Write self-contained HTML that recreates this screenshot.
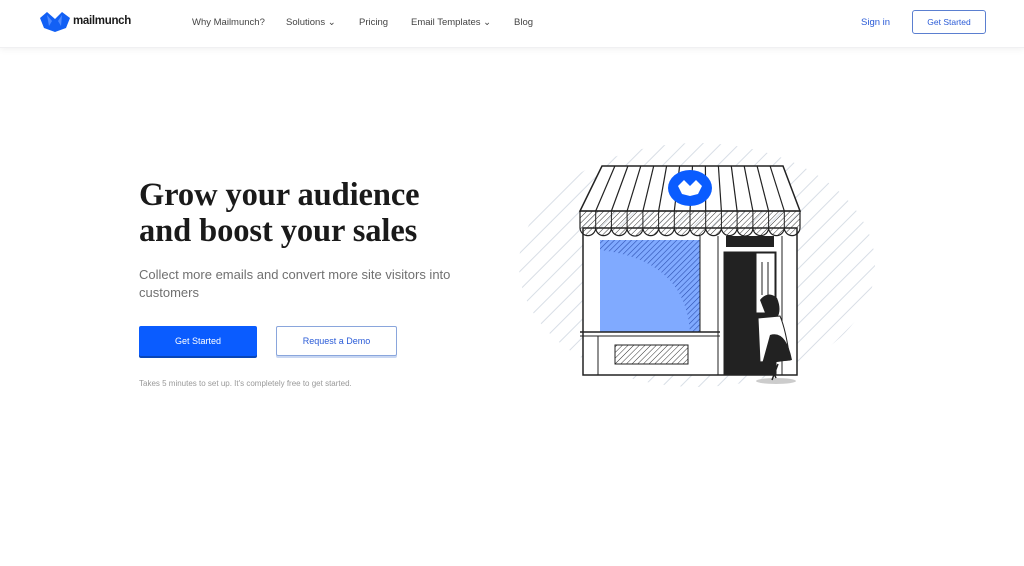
<!DOCTYPE html>
<html><head><meta charset="utf-8"><style>
*{margin:0;padding:0;box-sizing:border-box}
body{width:1024px;height:566px;background:#fff;font-family:"Liberation Sans",sans-serif;position:relative;overflow:hidden}
.nav{position:absolute;left:0;top:0;width:1024px;height:48px;background:#fff;box-shadow:0 2px 6px rgba(0,0,0,.05);border-bottom:1px solid #f0f0f2}
.nav a{position:absolute;top:17px;font-size:9.5px;color:#444;text-decoration:none}
.logo{position:absolute;left:40px;top:12px}
.brand{position:absolute;left:73px;top:15px;font-size:11.5px;font-weight:bold;color:#1a1a1a;letter-spacing:-.3px}
.btnnav{position:absolute;left:912px;top:10px;width:74px;height:24px;border:1px solid #5b7fd0;border-radius:3px;color:#2a5bd7;font-size:8.5px;text-align:center;line-height:22px}
h1{position:absolute;left:139px;top:177px;font-family:"Liberation Serif",serif;font-size:32.5px;line-height:36px;font-weight:bold;color:#1a1a1a;letter-spacing:-.1px}
.sub{position:absolute;left:139px;top:266px;font-size:13px;line-height:18px;color:#707070;width:330px}
.b1{position:absolute;left:139px;top:326px;width:118px;height:30px;background:#0a5cff;border-radius:2px;box-shadow:0 2px 0 #0846b8;color:#fff;font-size:9px;text-align:center;line-height:30px}
.b2{position:absolute;left:276px;top:326px;width:121px;height:30px;border:1px solid #8aa6dc;border-radius:2px;box-shadow:0 2px 0 #c9d7f2;color:#2a5bd7;font-size:9px;text-align:center;line-height:28px}
.small{position:absolute;left:139px;top:379px;font-size:8px;color:#999}
</style></head><body>
<div class="nav">
<svg class="logo" width="30" height="20" viewBox="0 0 30 20"><path d="M0 6 L7 0 L15 7 L22 0 L30 6 L26 16 L15 20 L4 16 Z" fill="#1260f5"/><path d="M7 3 L12 9 L9 14 Z M22 3 L18 9 L21 14 Z" fill="#4f8bff"/></svg>
<div class="brand">mailmunch</div>
<a style="left:192px">Why Mailmunch?</a>
<a style="left:286px">Solutions &#8964;</a>
<a style="left:359px">Pricing</a>
<a style="left:411px">Email Templates &#8964;</a>
<a style="left:514px">Blog</a>
<a style="left:861px;color:#2a5bd7">Sign in</a>
<div class="btnnav">Get Started</div>
</div>
<h1>Grow your audience<br>and boost your sales</h1>
<div class="sub">Collect more emails and convert more site visitors into customers</div>
<div class="b1">Get Started</div>
<div class="b2">Request a Demo</div>
<div class="small">Takes 5 minutes to set up. It's completely free to get started.</div>
<svg style="position:absolute;left:0;top:0" width="1024" height="566">
<defs>
<pattern id="bg" width="13" height="13" patternUnits="userSpaceOnUse" patternTransform="rotate(45)"><line x1="0" y1="0" x2="0" y2="13" stroke="#d8dee6" stroke-width="2"/></pattern>
<pattern id="h" width="4" height="4" patternUnits="userSpaceOnUse" patternTransform="rotate(45)"><line x1="0" y1="0" x2="0" y2="4" stroke="#333" stroke-width="1"/></pattern>
<pattern id="hb" width="4" height="4" patternUnits="userSpaceOnUse" patternTransform="rotate(45)"><line x1="0" y1="0" x2="0" y2="4" stroke="#2c4fb0" stroke-width="1.2"/></pattern>
<clipPath id="win"><rect x="600" y="240" width="100" height="92"/></clipPath>
</defs>
<ellipse cx="697" cy="265" rx="178" ry="122" fill="url(#bg)"/>
<rect x="583" y="228" width="214" height="147" fill="#fff" stroke="#222" stroke-width="1.5"/>
<rect x="600" y="240" width="100" height="92" fill="#80aaff"/>
<g clip-path="url(#win)"><path d="M600 240 L700 240 L700 332 L690 332 Q685 260 600 250 Z" fill="url(#hb)"/></g>
<line x1="700" y1="236" x2="700" y2="332" stroke="#222"/>
<line x1="718" y1="236" x2="718" y2="375" stroke="#222"/>
<line x1="580" y1="332" x2="720" y2="332" stroke="#222" stroke-width="1.5"/>
<line x1="580" y1="336" x2="720" y2="336" stroke="#222"/>
<line x1="598" y1="336" x2="598" y2="375" stroke="#222"/>
<rect x="615" y="345" width="73" height="19" fill="url(#h)" stroke="#222"/>
<rect x="726" y="236" width="48" height="11" fill="#222"/>
<rect x="724" y="252" width="52" height="122" fill="#222" stroke="#222"/>
<rect x="756" y="253" width="19" height="60" fill="#fff" stroke="#222"/>
<line x1="762" y1="262" x2="762" y2="295" stroke="#222"/><line x1="768" y1="262" x2="768" y2="295" stroke="#222"/>
<line x1="782" y1="236" x2="782" y2="375" stroke="#222"/>
<ellipse cx="776" cy="381" rx="20" ry="3" fill="#ccc"/>
<path d="M760 300 Q768 290 777 298 Q782 310 777 318 L767 318 Z" fill="#222"/>
<path d="M758 318 L780 316 Q786 330 790 360 L760 362 Z" fill="#fff" stroke="#222"/>
<path d="M770 335 Q786 330 792 360 L762 364 Z" fill="#222"/>
<path d="M770 364 L776 378 M778 364 L772 380" stroke="#222" stroke-width="1.5"/>
<path d="M602 166 L783 166 L800 211 L580 211 Z" fill="#fff" stroke="#222" stroke-width="1.5"/>
<g stroke="#222" stroke-width="1.2">
<line x1="614.9" y1="166" x2="595.7" y2="211"/><line x1="627.9" y1="166" x2="611.4" y2="211"/><line x1="640.8" y1="166" x2="627.1" y2="211"/><line x1="653.7" y1="166" x2="642.9" y2="211"/><line x1="666.6" y1="166" x2="658.6" y2="211"/><line x1="679.6" y1="166" x2="674.3" y2="211"/><line x1="692.5" y1="166" x2="690" y2="211"/><line x1="705.4" y1="166" x2="705.7" y2="211"/><line x1="718.4" y1="166" x2="721.4" y2="211"/><line x1="731.3" y1="166" x2="737.1" y2="211"/><line x1="744.2" y1="166" x2="752.9" y2="211"/><line x1="757.1" y1="166" x2="768.6" y2="211"/><line x1="770.1" y1="166" x2="784.3" y2="211"/>
</g>
<path d="M580 211 L800 211 L800 228 A7.86 8 0 0 1 784.3 228 A7.86 8 0 0 1 768.6 228 A7.86 8 0 0 1 752.9 228 A7.86 8 0 0 1 737.1 228 A7.86 8 0 0 1 721.4 228 A7.86 8 0 0 1 705.7 228 A7.86 8 0 0 1 690 228 A7.86 8 0 0 1 674.3 228 A7.86 8 0 0 1 658.6 228 A7.86 8 0 0 1 642.9 228 A7.86 8 0 0 1 627.1 228 A7.86 8 0 0 1 611.4 228 A7.86 8 0 0 1 595.7 228 A7.86 8 0 0 1 580 228 Z" fill="url(#h)" stroke="#222" stroke-width="1.2"/>
<g stroke="#222" stroke-width="1"><line x1="595.7" y1="211" x2="595.7" y2="228"/><line x1="611.4" y1="211" x2="611.4" y2="228"/><line x1="627.1" y1="211" x2="627.1" y2="228"/><line x1="642.9" y1="211" x2="642.9" y2="228"/><line x1="658.6" y1="211" x2="658.6" y2="228"/><line x1="674.3" y1="211" x2="674.3" y2="228"/><line x1="690" y1="211" x2="690" y2="228"/><line x1="705.7" y1="211" x2="705.7" y2="228"/><line x1="721.4" y1="211" x2="721.4" y2="228"/><line x1="737.1" y1="211" x2="737.1" y2="228"/><line x1="752.9" y1="211" x2="752.9" y2="228"/><line x1="768.6" y1="211" x2="768.6" y2="228"/><line x1="784.3" y1="211" x2="784.3" y2="228"/></g>
<ellipse cx="690" cy="188" rx="22" ry="18" fill="#0a5cff"/>
<path d="M678 186 L684 180 L690 186 L696 180 L702 186 L698 194 L690 196 L682 194 Z" fill="#fff"/>
</svg>
</body></html>
